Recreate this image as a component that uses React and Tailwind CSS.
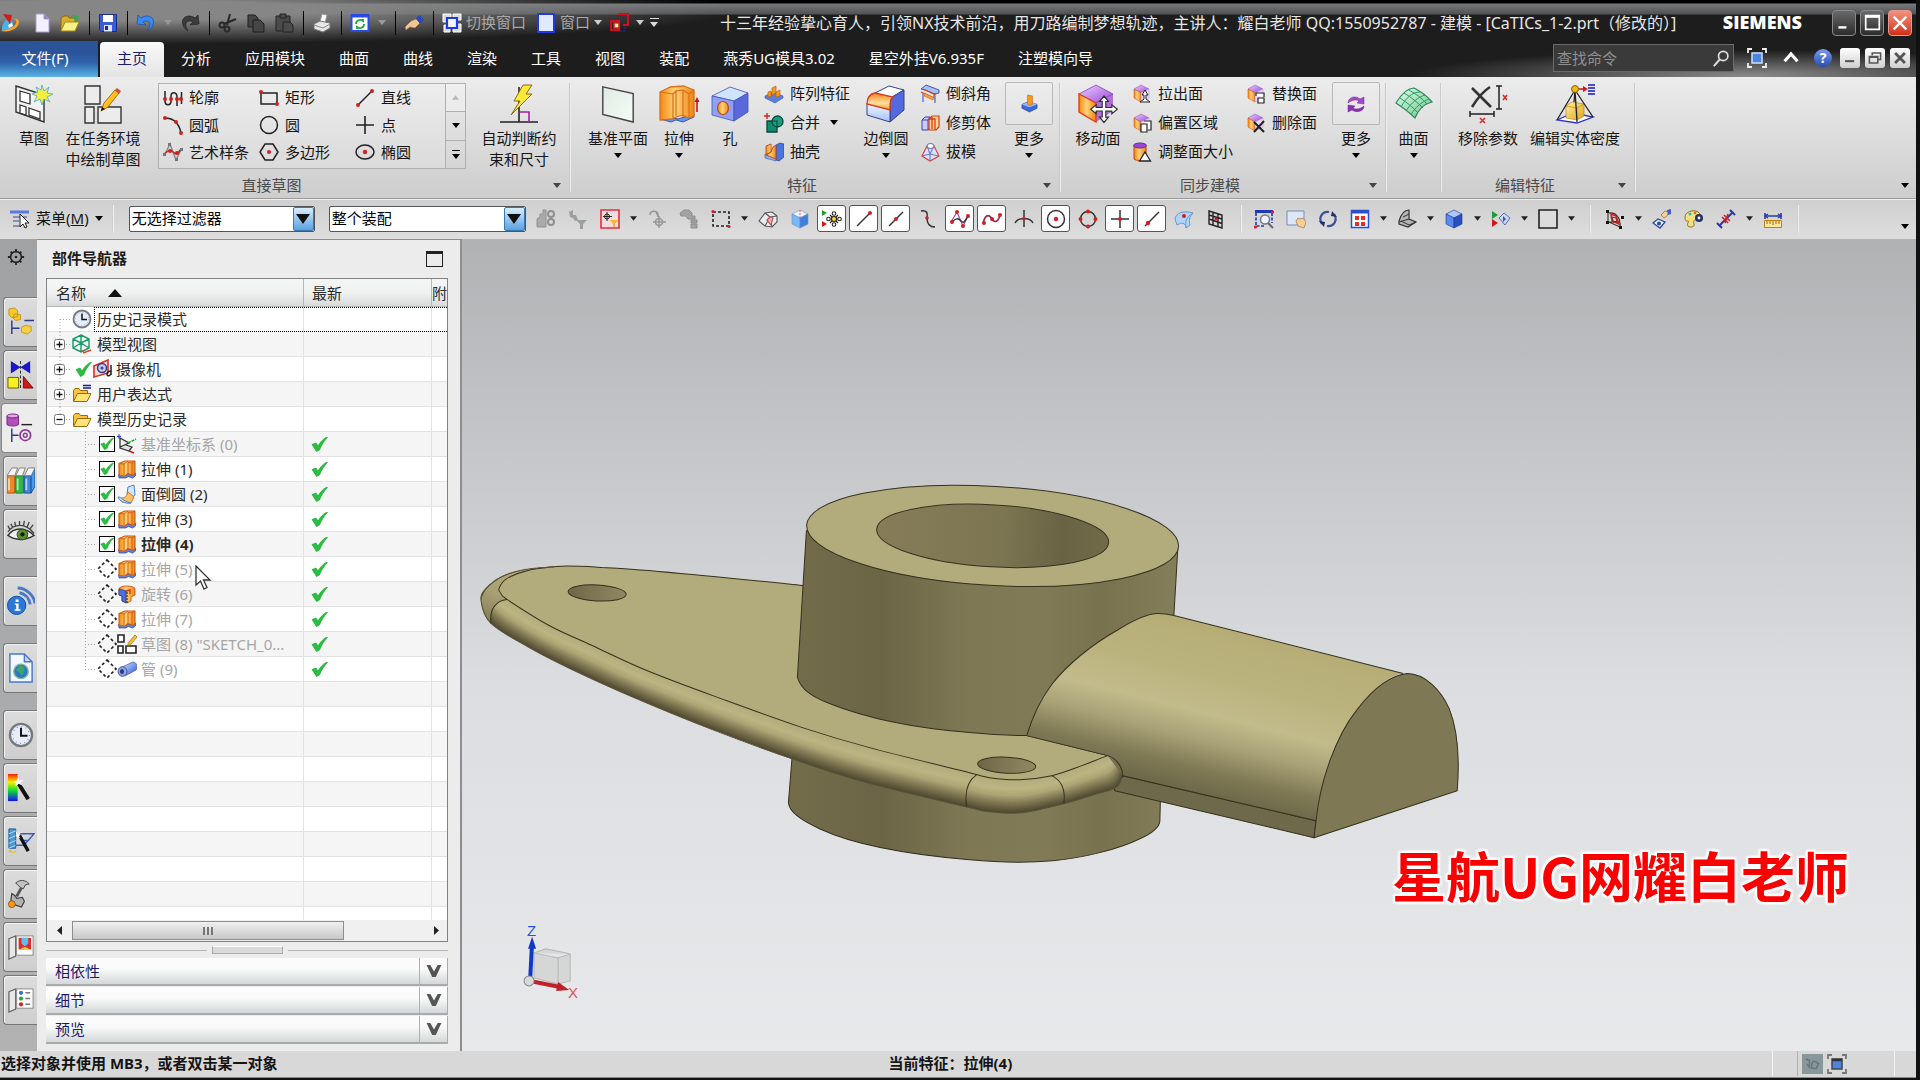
// NX modeling window — title bar, ribbon, selection bar, part navigator, viewport
import { Fragment } from 'react';

const Svg = ({ s = 22, w, h, vb, children, className = '' }) => (
  <svg width={w || s} height={h || s} viewBox={vb || '0 0 20 20'} className={`shrink-0 ${className}`} fill="none" aria-hidden="true">
    {children}
  </svg>
);

// Shared gradients, referenced by id from every icon
const Defs = () => (
  <svg className="absolute h-0 w-0" aria-hidden="true">
    <defs>
      <linearGradient id="gOr" x1="0" x2="1"><stop offset="0" stopColor="#f08a10" /><stop offset=".45" stopColor="#ffd27a" /><stop offset="1" stopColor="#f08410" /></linearGradient>
      <linearGradient id="gOrV" x1="0" x2="0" y1="0" y2="1"><stop offset="0" stopColor="#f0861a" /><stop offset=".6" stopColor="#ffe0a0" /><stop offset="1" stopColor="#f49a28" /></linearGradient>
      <linearGradient id="gBl" x1="0" x2="1" y1="0" y2="1"><stop offset="0" stopColor="#dfe9ff" /><stop offset=".5" stopColor="#7a9cf0" /><stop offset="1" stopColor="#3350b8" /></linearGradient>
      <linearGradient id="gSky" x1="0" x2="0" y1="0" y2="1"><stop offset="0" stopColor="#f4f8ff" /><stop offset="1" stopColor="#a4c0f8" /></linearGradient>
      <linearGradient id="gYe" x1="0" x2="1" y1="0" y2="1"><stop offset="0" stopColor="#fff0a8" /><stop offset="1" stopColor="#e2a310" /></linearGradient>
      <linearGradient id="gPu" x1="0" x2="1" y1="0" y2="1"><stop offset="0" stopColor="#ecd0ff" /><stop offset="1" stopColor="#9a48d8" /></linearGradient>
      <linearGradient id="gGn" x1="0" x2="1" y1="0" y2="1"><stop offset="0" stopColor="#dffbe6" /><stop offset="1" stopColor="#6cc78c" /></linearGradient>
      <linearGradient id="gGl" x1="0" x2="1" y1="0" y2="1"><stop offset="0" stopColor="#dfeae2" /><stop offset="1" stopColor="#f8fcf8" /></linearGradient>
      <linearGradient id="gRb" x1="0" x2="0" y1="0" y2="1"><stop offset="0" stopColor="#f02000" /><stop offset=".3" stopColor="#fff000" /><stop offset=".6" stopColor="#10e030" /><stop offset="1" stopColor="#1010f0" /></linearGradient>
    </defs>
  </svg>
);

const Caret = ({ className = 'text-[#222]', w = 8 }) => (
  <svg width={w} height="5" viewBox="0 0 8 5" className={className} aria-hidden="true"><path d="M0 0h8L4 5z" fill="currentColor" /></svg>
);

const Dot = ({ x, y, r = 1.6 }) => <circle cx={x} cy={y} r={r} fill="#d02020" />;

const Cube = ({ top = '#dfe9ff', left = '#8fb0f5', right = '#4a6ad0', line = '#4258a8' }) => (
  <g stroke={line} strokeWidth=".6" strokeLinejoin="round">
    <path d="M10 1l8 4-8 4-8-4z" fill={top} />
    <path d="M2 5l8 4v10l-8-4z" fill={left} />
    <path d="M18 5l-8 4v10l8-4z" fill={right} />
  </g>
);

const Extrude = () => (
  <>
    <path d="M1.500 15.500l6-1.500 4 1 7-1v3l-3 2-4-1.500-3 1.500H2z" fill="#5a84e8" stroke="#22409a" strokeWidth=".7" />
    <path d="M2 4.500L8 2h10v12.500l-2 2-5-2-3 2.500-6-.5z" fill="url(#gOr)" stroke="#d05a10" strokeWidth="1.100" strokeLinejoin="round" />
    <path d="M2 4.500l5 .5 4-3M7 5v11M11 3.500v11M15 4v12M15 4l3-2M11 3.500l4 .5" stroke="#d05a10" strokeWidth=".9" />
  </>
);

const Tick = ({ s = 17, className = '' }) => (
  <svg width={s} height={s} viewBox="0 0 17 17" className={className} aria-hidden="true">
    <path d="M1 8.500l4-1.500 2 3c2-3.500 4.500-6.500 8-8.500h1.500c-3.500 3.500-6 7.500-8 12.500l-3 1.500z" fill="#28c040" stroke="#12a028" strokeWidth=".6" />
  </svg>
);

const Folder = ({ expr }) => (
  <>
    <path d="M1.500 17V6.500l1.500-2h4l1.500 2h7V9" fill="#f6c53a" stroke="#9a6c08" />
    <path d="M1.500 17.500L5.500 9.500H19l-4 8z" fill="#ffe27a" stroke="#9a6c08" />
    {expr && <path d="M11 1.500h8M11 4h8" stroke="#1a1a9a" strokeWidth="1.300" />}
  </>
);

const Clock = () => (
  <>
    <circle cx="10" cy="10" r="8.500" fill="#e6eefc" stroke="#77797c" strokeWidth="1.800" />
    <circle cx="10" cy="10" r="6.500" stroke="#8a98b8" strokeWidth="1" strokeDasharray=".8 2.600" />
    <path d="M10 4.500V10.500H15" stroke="#111" strokeWidth="1.500" />
  </>
);

/* ── Title bar icons ──────────────────────────────────────── */
const quickIcons = {
  logo: <><path d="M2 18C1 13 4 7 9 6l4 3c0 5-5 9-11 9z" fill="#4ab0e8" /><path d="M1 18c9 2 18-3 18-9 0-3-3-4-6-3 4 0 4 3 2 6-3 3-8 5-14 6z" fill="#f5a52a" /><path d="M3 1l9 1-2 9z" fill="#d81818" /><path d="M8 12l4-2 1 3-4 2z" fill="#fff" /></>,
  new: <path d="M4 1h8l5 5v13H4z M12 1v5h5" fill="#f4f0ff" stroke="#a8a0d8" />,
  open: <><path d="M1 18V5l3-2h4l1 2h6v4" fill="#d8b030" stroke="#8a6a08" /><path d="M1 18l4-9h14l-4 9z" fill="#fbf08a" stroke="#a48a18" /><path d="M11 4c2-3 5-3 6 0l2-1-2 5-4-3 2-.5c-1-2-2-2-4-.5z" fill="#2cb048" /></>,
  save: <><path d="M1.500 1.500h17v17h-15l-2-2z" fill="#3a5ad8" stroke="#1a2a88" /><path d="M5 2h10v7H5z" fill="#fff" /><path d="M6 12h8v6.500H6z" fill="#dfe6ff" /><path d="M7 13h3v4H7z" fill="#1a2a88" /></>,
  undo: <path d="M1 11l1-9 3 3c7-5 15 0 12 7-1 3-4 5-6 6 4-5 4-9 0-10-2 0-3 .5-4 1l3 3z" fill="#3a8af0" stroke="#1a4aa8" strokeWidth=".7" />,
  redo: <path d="M19 11l-1-9-3 3C8 0 0 5 3 12c1 3 3 5 5 6-3-5-3-9 1-10 2 0 3 .5 4 1l-3 3z" fill="#3c3c3c" stroke="#222" strokeWidth=".7" />,
  cut: <g stroke="#2a2a2a" strokeWidth="2"><path d="M12 1l-3 11M18 6L6 11" /><circle cx="4" cy="12" r="2.500" /><circle cx="9" cy="16" r="2.500" /></g>,
  copy: <g fill="#454545" stroke="#1e1e1e"><path d="M2 2h7l3 3v9H2z" /><path d="M7 7h7l4 4v8H7z" /></g>,
  paste: <g fill="#4a4a4a" stroke="#222"><path d="M2 3h14v15H2z" /><path d="M6 1h6v4H6z" /><path d="M9 9h7l3 3v7H9z" /></g>,
  print: <><path d="M8 9l2-8 5 1-2 8z" fill="#fff" stroke="#999" /><path d="M2 11l6-3 10 2v5l-7 4-9-3z" fill="#e6e6e6" stroke="#777" /><path d="M2 12l9 3 7-4" stroke="#888" /></>,
  refresh: <><path d="M1.500 2h17v16h-17z" fill="#fff" stroke="#2a4ae0" strokeWidth="2" /><path d="M2 3h16" stroke="#2a4ae0" strokeWidth="3" /><path d="M6 11c0-4 4-5 7-3V6M14 11c0 4-4 5-7 3v2" stroke="#18a838" strokeWidth="1.800" /></>,
  hand: <><path d="M1 14l6-6 5-2 4 4-5 5-5-1-4 3z" fill="#f0c898" stroke="#a06a38" strokeWidth=".8" /><path d="M12 5l4-3 4 5-4 4z" fill="#2a4ab8" /></>,
  switchWin: <><path d="M1 1h8v8H1zM11 1h8v6h-8zM2 12h6v7H2zM11 11h8v8h-8z" fill="#ddd" stroke="#fff" /><path d="M5 5h10v10H5z" fill="#f4f6ff" stroke="#2038e0" strokeWidth="2.200" /></>,
  window: <path d="M2 1h16v18H2z" fill="#dfeaff" stroke="#2038e0" strokeWidth="2" />,
  red: <><path d="M8 1h10v11h-5M1 8h8v9H1z" stroke="#d01020" strokeWidth="2.200" /><path d="M4 10h5v5H4z" fill="#fff2a0" stroke="#e02020" strokeWidth="1.500" /><path d="M10 18h5v-4" stroke="#3030b0" strokeDasharray="2 1.500" /></>,
};

const quickBar = [
  'new', 'open', '|', 'save', '|', 'undo', 'v', 'redo', '|', 'cut', 'copy', 'paste', '|', 'print', '|', 'refresh', 'v', '|', 'hand', '|',
];

const QuickButton = ({ name }) => (
  <button className="flex w-7 shrink-0 justify-center" aria-label={name}><Svg s={20}>{quickIcons[name]}</Svg></button>
);

const tabs = ['分析', '应用模块', '曲面', '曲线', '渲染', '工具', '视图', '装配', '燕秀UG模具3.02', '星空外挂V6.935F', '注塑模向导'];

const winButton = 'flex h-[26px] w-6 items-center justify-center rounded-[4px] border border-[#8a8a8a] bg-linear-to-b from-[#6a6a6a] to-[#2c2c2c]';
const docButton = 'flex h-5 w-5 items-center justify-center rounded-[3px] bg-linear-to-b from-white to-[#cfcfcf]';

const FullScreen = ({ dark }) => (
  <Svg s={20}>
    <path d="M1 5V1h4M15 1h4v4M19 15v4h-4M5 19H1v-4" stroke={dark ? '#777' : '#eee'} strokeWidth="1.800" />
    <path d="M5 5h10v10H5z" fill="#4a86e0" stroke={dark ? '#444' : '#cfe0ff'} strokeWidth="1.500" />
    {dark && <path d="M5 6h10" stroke="#333" strokeWidth="2.500" />}
  </Svg>
);

const Header = () => (
  <header className="shrink-0 bg-[#1d1d1d] bg-[radial-gradient(ellipse_340px_26px_at_1750px_76px,#8a8a8a,transparent),radial-gradient(ellipse_620px_34px_at_120px_10px,#868686_30%,transparent),linear-gradient(to_bottom,#000_3px,#77797b_4px,#505254_14px,transparent_15px)]">
    <div className="flex h-[41px] items-center pt-1 text-[15px] text-[#e6e6e6]">
      <span className="mr-2 flex w-5 shrink-0"><Svg s={20}>{quickIcons.logo}</Svg></span>
      {quickBar.map((it, i) => (
        <Fragment key={i}>
          {it === '|' && <span className="flex w-[10px] justify-center"><i className="h-6 w-px bg-black" /></span>}
          {it === 'v' && <button className="flex w-4 justify-center" aria-label="展开"><Caret className="text-[#9a9a9a]" /></button>}
          {it.length > 1 && <QuickButton name={it} />}
        </Fragment>
      ))}
      <button className="flex items-center text-[#a8a8a8]"><span className="flex w-7 justify-center"><Svg s={20}>{quickIcons.switchWin}</Svg></span>切换窗口</button>
      <button className="ml-[6px] flex items-center text-[#a8a8a8]"><span className="flex w-7 justify-center"><Svg s={20}>{quickIcons.window}</Svg></span>窗口<span className="flex w-4 justify-center"><Caret className="text-[#ccc]" /></span></button>
      <QuickButton name="red" />
      <button className="flex w-3 justify-center" aria-label="展开"><Caret className="text-[#ccc]" /></button>
      <button className="flex w-4 flex-col items-center gap-[3px]" aria-label="自定义"><i className="h-px w-[9px] bg-[#ddd]" /><Caret className="text-[#ddd]" /></button>
      <h1 className="ml-[58px] flex-1 whitespace-nowrap text-[16px]">十三年经验挚心育人，引领NX技术前沿，用刀路编制梦想轨迹，主讲人：耀白老师 QQ:1550952787 - 建模 - [CaTICs_1-2.prt（修改的）]</h1>
      <strong className="mr-[30px] font-['Open_Sans',sans-serif] text-[18px] font-extrabold text-white">SIEMENS</strong>
      <div className="mr-[4px] flex gap-1">
        <button className={winButton} aria-label="最小化"><Svg s={16}><path d="M3 14h10v3H3z" fill="#fff" /></Svg></button>
        <button className={winButton} aria-label="最大化"><Svg s={17}><path d="M2 2h16v16H2z" stroke="#fff" strokeWidth="2" /><path d="M2 3h16" stroke="#fff" strokeWidth="3" /></Svg></button>
        <button className="flex h-[26px] w-6 items-center justify-center rounded-[4px] border border-[#e89888] bg-linear-to-b from-[#f0907c] to-[#d02c10]" aria-label="关闭"><Svg s={16}><path d="M2 2l16 16M18 2L2 18" stroke="#fff" strokeWidth="3" /></Svg></button>
      </div>
    </div>
    <div className="flex h-9 items-stretch text-[15px] text-white">
      <button className="w-[98px] bg-linear-to-b from-[#2a5398] from-30% via-[#2f62ac] via-60% to-[#5ab4e4] pb-[2px] pr-2">文件(F)</button>
      <nav className="ml-[2px] flex items-stretch">
        <a href="#home" className="mt-px flex items-center rounded-t-[4px] bg-linear-to-b from-[#fafafa] to-[#e4e4e4] px-[17px] pb-[2px] text-[#1a1a6e]">主页</a>
        {tabs.map((t) => <a key={t} href="#tab" className="flex items-center px-[17px] pb-[2px]">{t}</a>)}
      </nav>
      <div className="ml-auto flex items-center pb-[2px]">
        <label className="flex h-7 w-[181px] items-center border border-[#6a6a6a] bg-[#3a3a3a] px-[3px]">
          <input className="w-full bg-transparent text-[15px] placeholder:text-[#8f8f8f] focus:outline-none" placeholder="查找命令" aria-label="查找命令" />
          <Svg s={17}><circle cx="12" cy="7" r="5.500" stroke="#ddd" strokeWidth="2" /><path d="M8 11l-7 8" stroke="#ddd" strokeWidth="2.500" /></Svg>
        </label>
        <button className="ml-3 flex w-[22px] justify-center" aria-label="全屏"><FullScreen /></button>
        <button className="ml-3 flex w-[22px] justify-center" aria-label="折叠功能区"><Svg s={16}><path d="M2 14l8-9 8 9" stroke="#fff" strokeWidth="4" /></Svg></button>
        <button className="ml-3 flex w-[18px] justify-center" aria-label="帮助"><span className="flex h-[18px] w-[18px] items-center justify-center rounded-full bg-linear-to-b from-[#7a9cf0] to-[#2a4cb0] text-[14px] font-bold leading-none">?</span></button>
        <div className="ml-2 mr-[6px] flex gap-[5px]">
          <button className={docButton} aria-label="最小化文档"><Svg s={14}><path d="M3 13h13v3H3z" fill="#555" /></Svg></button>
          <button className={docButton} aria-label="还原文档"><Svg s={14}><path d="M6 6V3h12v9h-4M2 8h12v9H2zM2 9h12" stroke="#555" strokeWidth="2.200" /></Svg></button>
          <button className={docButton} aria-label="关闭文档"><Svg s={14}><path d="M3 3l14 14M17 3L3 17" stroke="#555" strokeWidth="4" /></Svg></button>
        </div>
      </div>
    </div>
  </header>
);

/* ── Ribbon ───────────────────────────────────────────────── */
const big = {
  sketch: (
    <Svg s={40} vb="0 0 40 40"><path d="M2 2l28 9v27L2 28z" fill="#f2f2f2" stroke="#333" strokeWidth="1.400" /><path d="M6 7l10 3v10L6 17zM6 21l6 2v8l-6-2zM15 24l11 4v7l-11-4z" fill="#fff" stroke="#333" strokeWidth="1.300" /><path d="M28 1l2 6 5-4-2 6 6 1-6 3 3 5-6-3-2 6-2-6-6 3 3-6-5-2 6-2-2-5 5 3z" fill="#f4f040" stroke="#4aa8d8" strokeWidth=".8" /></Svg>
  ),
  task: (
    <Svg s={40} vb="0 0 40 40"><path d="M2 2h15v18H2zM2 23h9v16H2zM15 23h23v16H15z" fill="#ececec" stroke="#333" strokeWidth="1.400" /><path d="M18 27l3-8L32 6l4 3-11 14z" fill="#ffc020" stroke="#a86a10" /><path d="M32 6l2-2 4 3-2 3z" fill="#d85038" /><path d="M18 27l1-4 3 2z" fill="#111" /></Svg>
  ),
  auto: (
    <Svg s={40} vb="0 0 40 40"><path d="M20 3v35M1 38h38" stroke="#222" strokeWidth="1.600" /><path d="M21 28h9v10" stroke="#a020a0" strokeWidth="1.600" /><path d="M24 1h9l-6 9h6L12 31l9-14h-6z" fill="#ffe838" stroke="#8a6a10" /></Svg>
  ),
  plane: <Svg s={38} vb="0 0 40 40"><path d="M4 2l32 7v30L4 31z" fill="url(#gGl)" stroke="#444" strokeWidth="1.500" /></Svg>,
  extrude: (
    <Svg w={42} h={38} vb="0 0 42 38">
      <path d="M2 34l11-2 7 2 16-5v3l-11 5-7-2-5 2z" fill="#6a94ec" stroke="#22409a" strokeWidth=".8" />
      <path d="M2 7l10-5 14-1 10 4v26l-6 2-5-3-7 2-4 2-12 1z" fill="url(#gOr)" stroke="#d8701a" strokeWidth="1.300" strokeLinejoin="round" />
      <path d="M2 7l13 2v25M15 9l3-3v25M18 6l7-1v27M25 5l6 4v24M31 9l5-4" stroke="#d8701a" strokeWidth="1.200" />
      <path d="M39 27V16" stroke="#c01818" strokeWidth="1.600" /><path d="M36.500 17l2.500-5 2.500 5z" fill="#c01818" />
    </Svg>
  ),
  hole: (
    <Svg w={40} h={38} vb="0 0 40 38"><g stroke="#4456a8" strokeWidth=".8" strokeLinejoin="round"><path d="M2 11L20 2l18 6-14 8z" fill="#d0e4ff" /><path d="M2 11l22 5v20L2 30z" fill="#90a0fa" /><path d="M38 8L24 16v20l14-9z" fill="#5a68dc" /></g><ellipse cx="13" cy="23" rx="5.500" ry="6.500" fill="url(#gOr)" stroke="#c04a10" strokeWidth="1.200" /></Svg>
  ),
  edge: (
    <Svg w={42} h={40} vb="0 0 42 40"><g stroke="#34408a" strokeWidth="1" strokeLinejoin="round"><path d="M10 9L24 2l15 4-13 8z" fill="#fff" /><path d="M39 6v20L25 38V20c0-3 1-5 2-7z" fill="#5468e0" /><path d="M2 19l23 6v13L2 31z" fill="url(#gSky)" /></g><path d="M2 20c0-6 3-10 8-11l18 4c-3 2-3 6-3 13z" fill="url(#gOrV)" stroke="#d83a18" strokeWidth="1.300" /></Svg>
  ),
  more1: <Svg s={19}><path d="M2 11l7-3 9 3v4l-8 4-8-4z" fill="#3a68d8" stroke="#203a90" strokeWidth=".6" /><path d="M2 11l8 3 8-3-8-3z" fill="#9abcf8" /><path d="M8 1l5 1v9l-3 1-2-1z" fill="#ff9a18" stroke="#b85a00" strokeWidth=".6" /></Svg>,
  move: (
    <Svg w={42} h={40} vb="0 0 42 40"><path d="M19 1l17 9v17L19 38 2 28V10z" fill="#b070e0" /><path d="M19 1l17 9-17 9L2 10z" fill="url(#gPu)" stroke="#8a48b8" strokeWidth=".8" /><path d="M2 10l17 9v19L2 28z" fill="url(#gOr)" stroke="#e0401a" strokeWidth="1.400" /><path d="M27 12l4.500 5.500h-2.700v6h6v-2.700l5.500 4.500-5.500 4.500v-2.700h-6v6h2.700L27 38.500l-4.500-5.500h2.700v-6h-6v2.700l-5.500-4.500 5.500-4.500v2.700h6v-6h-2.700z" fill="#fff" stroke="#333" strokeWidth="1.200" /></Svg>
  ),
  more2: <Svg s={20}><path d="M2 9c0-6 8-8 12-4l4-2v7l-7-1 2-2C10 5 6 6 2 9z" fill="#a44ac8" stroke="#6a2890" strokeWidth=".5" /><path d="M18 12c0 6-8 7-12 4l-4 2v-7l7 1-2 2c3 2 7 1 11-2z" fill="#8a30b0" stroke="#6a2890" strokeWidth=".5" /></Svg>,
  surface: (
    <Svg s={40} vb="0 0 40 40"><path d="M2 19C8 9 14 4 20 4c6 3 13 8 18 14-8 2-14 8-17 16C14 27 8 23 2 19z" fill="url(#gGn)" stroke="#2a8a5a" strokeWidth="1.200" /><path d="M7 23C12 14 18 8 26 8M12 27c5-8 12-14 19-16M17 31c4-8 11-13 18-16M6 14c6 4 13 9 18 15M10 9c7 4 14 10 19 15M15 6c7 4 13 8 18 14" stroke="#2a9a68" /></Svg>
  ),
  params: (
    <Svg s={40} vb="0 0 40 40"><path d="M4 4l19 19M22 3C14 8 9 15 4 23" stroke="#333" strokeWidth="2.600" /><path d="M28 2h6M31 2v23M28 25h6M2 27v6M2 30h24M26 27v6" stroke="#222" strokeWidth="1.500" /><path d="M35 11l4 5M39 11l-4 5M12 34l5 5M17 34l-5 5" stroke="#d03030" strokeWidth="1.600" /></Svg>
  ),
  density: (
    <Svg s={40} vb="0 0 40 40"><path d="M2 36l16-7 20 4-16 6z" fill="#fff" stroke="#3030c0" strokeWidth="1.300" /><path d="M11 22l6-4 12 2v12l-7 4-11-2z" fill="url(#gYe)" stroke="#b07a00" strokeWidth=".6" /><path d="M11 22l11 2 7-4M22 24v12" stroke="#c89018" strokeWidth=".8" /><path d="M20 6L2 36M20 6l18 27M20 6l2 32M20 6l-1 12" stroke="#222" strokeWidth="1.300" /><circle cx="20" cy="5" r="3.500" fill="#f0b818" stroke="#8a6000" /><path d="M24 5h6" stroke="#d01818" strokeWidth="1.500" /><path d="M28 2l5 3-5 3z" fill="#d01818" /><path d="M33 1h7M33 4h7M33 7h7M33 10h7" stroke="#1a1ac0" strokeWidth="1.500" /></Svg>
  ),
};

const BigButton = ({ icon, lines, w, caret, boxed }) => (
  <button className={`flex shrink-0 flex-col items-center pt-[5px] ${w}`}>
    <span className={`flex h-[43px] items-center justify-center ${boxed ? 'w-12 rounded-[2px] border border-[#b8b8b8] bg-white/10' : ''}`}>{big[icon]}</span>
    <span className="mt-[3px] whitespace-nowrap leading-[21px]">{lines.map((l) => <span key={l} className="block">{l}</span>)}</span>
    {caret && <span className="mt-1"><Caret className="text-black" /></span>}
  </button>
);

const faceCube = (
  <g strokeWidth=".5"><path d="M9 1l8 4-8 4-7-4z" fill="url(#gPu)" stroke="#8a48b8" /><path d="M2 5l7 4v9l-7-4z" fill="url(#gOr)" stroke="#d83a10" /><path d="M17 5L9 9v9l8-4z" fill="#e8d8f4" stroke="#b890d0" /></g>
);

const small = {
  profile: <><path d="M2 3v10c0 5 6 5 6 0V8c0-5 6-4 6 1v9M18.500 4v12" stroke="#222" strokeWidth="1.500" /><Dot x="2" y="11" r="2" /><Dot x="8" y="11" r="2" /><Dot x="14" y="11" r="2" /><Dot x="18" y="11" r="2" /></>,
  rect: <><path d="M2 5h16v11H2z" stroke="#222" strokeWidth="1.500" /><Dot x="2" y="4" r="2" /><Dot x="18" y="16" r="2" /></>,
  line: <><path d="M3 17L17 3" stroke="#222" strokeWidth="1.500" /><Dot x="3" y="17" r="2" /><Dot x="17" y="3" r="2" /></>,
  arc: <><path d="M2 3c8 0 14 5 16 15" stroke="#222" strokeWidth="1.500" /><Dot x="2" y="3" r="2" /><Dot x="13" y="7" r="2" /><Dot x="18" y="18" r="2" /></>,
  circle: <circle cx="10" cy="10" r="8.500" stroke="#222" strokeWidth="1.500" />,
  point: <path d="M10 1v18M1 10h18" stroke="#222" strokeWidth="1.600" />,
  spline: <><path d="M2 12L7 2l6 16 5-10" stroke="#8a8a8a" strokeWidth="1.500" /><path d="M1 12c4-3 6-5 9-2s5 2 8-3" stroke="#b02828" strokeWidth="1.500" /><path d="M5 1h3v3H5zM12 16h3v3h-3zM17 6h3v3h-3zM0 11h3v3H0z" fill="#777" /><Dot x="7" y="9" r="2" /><Dot x="14" y="11" r="2" /></>,
  polygon: <><path d="M6 2h8l5 8-5 8H6l-5-8z" stroke="#222" strokeWidth="1.500" /><Dot x="10" y="10" r="2" /></>,
  ellipse: <><ellipse cx="10" cy="10" rx="9" ry="7" stroke="#222" strokeWidth="1.500" /><Dot x="10" y="10" r="2.200" /></>,
  pattern: <><path d="M1 12l8-4 10 4v2l-8 5-10-5z" fill="#5a80dc" stroke="#3a58a8" strokeWidth=".6" /><path d="M4 8l3-1v5l-3 1zM8 4l4-2v7l-4 2zM12 8l4-2v6l-4 1z" fill="#f8981c" stroke="#b06010" strokeWidth=".6" /></>,
  unite: <><path d="M3 8h10v11H3z" fill="#128a70" stroke="#084838" strokeWidth="1.300" /><circle cx="13.500" cy="8.500" r="5.500" fill="#1c9c80" stroke="#084838" strokeWidth="1.300" /><path d="M8 8h5v6" stroke="#084838" strokeWidth="1.100" /><path d="M3 0v6M0 3h6" stroke="#d82020" strokeWidth="1.400" /></>,
  shell: <><path d="M12 3l4-2 4 1v13l-5 4-3-1z" fill="#4a74e0" stroke="#28408a" strokeWidth=".7" /><path d="M1 12l11 5v2L1 16z" fill="#8ab0f4" stroke="#3858a8" strokeWidth=".6" /><path d="M2 4l5-2v8l-5 3zM12 3v14l-10-4 5-3 2-5z" fill="url(#gOr)" stroke="#c04a10" strokeWidth=".9" /></>,
  chamfer: <><path d="M1 5l5-4 13 5v3l-4 1L5 6z" fill="#a8c0f4" stroke="#3848a8" strokeWidth=".9" /><path d="M3 5l13 6M1 8l13 6V9" stroke="#d84018" strokeWidth="1.300" /><path d="M4 9l11 5-2 2L4 12z" fill="#f8a038" stroke="#c05010" strokeWidth=".5" /><path d="M3 9v9M15 12v7" stroke="#6a88e0" strokeWidth="1.600" /></>,
  trim: <><path d="M2 7l3-3h5v11l-2 2H2z" fill="#c8d0fa" stroke="#3a3ad0" /><path d="M2 7h6v10M8 7l2-3" stroke="#3a3ad0" /><path d="M9 6l3-3h7v11l-3 3H9z" fill="#ffd890" stroke="#d83a10" strokeWidth="1.200" /><path d="M9 6h6v11M12 4v12" stroke="#d83a10" strokeWidth="1.300" /></>,
  draft: <><path d="M2 14l5-10h7l5 10-9 5z" fill="#dde4f8" stroke="#d83a30" strokeWidth="1.100" /><path d="M2 14l8-2 9 2M10 12v7M7 4l3 8 4-8" stroke="#6a78d0" strokeWidth="1.100" /><ellipse cx="10.500" cy="4" rx="3.500" ry="2.500" fill="#fff" stroke="#5868c0" /></>,
  pull: <>{faceCube}<path d="M13 6l3 5h-2v4l4 3h-10l4-3v-4h-2z" fill="#fff" stroke="#222" /></>,
  offset: <>{faceCube}<path d="M9 11h6v8H9zM12 8h7v9h-3" fill="#fff" stroke="#222" strokeWidth="1.200" /></>,
  resize: <><path d="M2 4v13c2 2 10 2 12 0V4" fill="url(#gOr)" stroke="#d83a10" /><ellipse cx="8" cy="3.500" rx="6.500" ry="2.500" fill="#9a48d8" stroke="#6a2898" /><path d="M13 10l5.500 9h-11z" fill="#fff" stroke="#222" strokeWidth="1.300" /></>,
  replace: <>{faceCube}<path d="M10 12V9h8v4M12 14h6v5h-6z" fill="#fff" stroke="#222" strokeWidth="1.200" /></>,
  remove: <>{faceCube}<path d="M8 9l10 10M18 8L8 19" stroke="#222" strokeWidth="2" /></>,
};

const SmallButton = ({ icon, label, caret, className = 'h-[29px] gap-[6px]' }) => (
  <button className={`flex items-center whitespace-nowrap ${className}`}><Svg s={20}>{small[icon]}</Svg>{label}{caret && <span className="ml-1"><Caret className="text-black" /></span>}</button>
);

const SmallColumn = ({ items, className = '' }) => (
  <div className={`flex flex-col items-start pt-[2px] ${className}`}>{items.map((it) => <SmallButton key={it.label} {...it} />)}</div>
);

const Group = ({ label, children, className = '' }) => (
  <section className={`relative flex flex-col ${className}`}>
    <div className="flex h-[98px] items-start">{children}</div>
    {label && (
      <div className="flex h-5 items-center text-[#4a4a4a]">
        <h2 className="flex-1 text-center">{label}</h2>
        <button className="flex w-7 justify-center" aria-label={`${label}选项`}><Caret className="text-[#444]" /></button>
      </div>
    )}
    <i className="absolute right-0 top-[6px] h-[109px] w-[2px] bg-linear-to-r from-[#b8b8b8] to-white" />
  </section>
);

const curves = [
  ['profile', '轮廓'], ['rect', '矩形'], ['line', '直线'],
  ['arc', '圆弧'], ['circle', '圆'], ['point', '点'],
  ['spline', '艺术样条'], ['polygon', '多边形'], ['ellipse', '椭圆'],
];

const Ribbon = () => (
  <div className="flex h-[122px] shrink-0 items-stretch border-b border-[#9a9a9a] bg-linear-to-b from-[#ececec] to-[#cdcdcd] text-[15px] text-[#161616]">
    <Group label="直接草图" className="w-[571px]">
      <BigButton icon="sketch" lines={['草图']} w="ml-1 w-[60px]" />
      <BigButton icon="task" lines={['在任务环境', '中绘制草图']} w="w-[78px]" />
      <div className="ml-4 mt-[6px] flex h-[86px] w-[308px] border border-[#b0b0b0]">
        <div className="grid flex-1 grid-cols-[96px_96px_1fr] grid-rows-3 bg-white/15 pb-[2px] pl-1">
          {curves.map(([icon, label]) => <SmallButton key={icon} icon={icon} label={label} className="gap-[6px]" />)}
        </div>
        <div className="flex w-5 flex-col divide-y divide-[#b0b0b0] border-l border-[#b0b0b0]">
          <button className="flex flex-1 items-center justify-center bg-white/25" aria-label="上一行"><Caret w={7} className="rotate-180 text-[#b8b8b8]" /></button>
          <button className="flex flex-1 items-center justify-center" aria-label="下一行"><Caret className="text-black" /></button>
          <button className="flex flex-1 flex-col items-center justify-center gap-[3px]" aria-label="更多曲线"><i className="h-px w-2 bg-black" /><Caret className="text-black" /></button>
        </div>
      </div>
      <BigButton icon="auto" lines={['自动判断约', '束和尺寸']} w="ml-[14px] w-[78px] text-center" />
    </Group>
    <Group label="特征" className="w-[490px]">
      <BigButton icon="plane" lines={['基准平面']} w="ml-4 w-[62px]" caret />
      <BigButton icon="extrude" lines={['拉伸']} w="w-[60px]" caret />
      <BigButton icon="hole" lines={['孔']} w="w-[42px]" />
      <SmallColumn className="ml-[13px]" items={[{ icon: 'pattern', label: '阵列特征' }, { icon: 'unite', label: '合并', caret: true }, { icon: 'shell', label: '抽壳' }]} />
      <BigButton icon="edge" lines={['边倒圆']} w="ml-[6px] w-[60px]" caret />
      <SmallColumn className="ml-1" items={[{ icon: 'chamfer', label: '倒斜角' }, { icon: 'trim', label: '修剪体' }, { icon: 'draft', label: '拔模' }]} />
      <BigButton icon="more1" lines={['更多']} w="ml-[14px] w-12" caret boxed />
    </Group>
    <Group label="同步建模" className="w-[326px]">
      <BigButton icon="move" lines={['移动面']} w="ml-[7px] w-[60px]" />
      <SmallColumn className="ml-1" items={[{ icon: 'pull', label: '拉出面' }, { icon: 'offset', label: '偏置区域' }, { icon: 'resize', label: '调整面大小' }]} />
      <SmallColumn className="ml-[13px]" items={[{ icon: 'replace', label: '替换面' }, { icon: 'remove', label: '删除面' }]} />
      <BigButton icon="more2" lines={['更多']} w="ml-[15px] w-12" caret boxed />
    </Group>
    <Group className="w-[55px]">
      <BigButton icon="surface" lines={['曲面']} w="w-[53px]" caret />
    </Group>
    <Group label="编辑特征" className="w-[194px]">
      <BigButton icon="params" lines={['移除参数']} w="ml-[14px] w-[64px]" />
      <BigButton icon="density" lines={['编辑实体密度']} w="ml-2 w-[94px]" />
    </Group>
    <button className="ml-auto mr-[7px] mt-[106px] h-[5px]" aria-label="功能区选项"><Caret className="text-black" /></button>
  </div>
);

/* ── Selection bar ────────────────────────────────────────── */
const K = { stroke: '#333', strokeWidth: 1.5 };
const sel = {
  gearsOff: <g fill="#a8aca6" stroke="#8e928c"><path d="M1 10l3-2V5h3V1h3v17H1z" /><circle cx="15" cy="5" r="3" fill="none" strokeWidth="2" /><circle cx="15" cy="13" r="3" fill="none" strokeWidth="2" /></g>,
  filterOff: <g fill="#9aa0a0"><path d="M1 3l4-2v5h3l2 5-3 1-2-3-3-1z" /><path d="M8 11h11l-4 4v5h-3v-5z" /></g>,
  snapRed: <><path d="M1 1h18v18H1z" fill="#f4dcdc" stroke="#e03040" strokeWidth="1.600" /><path d="M7 3v9M3 7.500h9" stroke="#222" /><circle cx="7" cy="7.500" r="2.500" stroke="#222" /><path d="M10 11h8l-3 4v3h-2v-3z" fill="#f8b828" /></>,
  moveOff: <g stroke="#989898" strokeWidth="1.600"><path d="M3 6c0-5 8-5 8 0v2M9 3l2 4" /><circle cx="12" cy="13" r="3.500" /><path d="M12 7v12M6 13h13" /></g>,
  rotOff: <g fill="#a2a2a2" stroke="#8e8e8e"><path d="M1 4l4-3h5l3 3v3h3v3H9L7 7H2z" /><path d="M12 11h6v3h-6zM12 15h6v4h-6z" /></g>,
  marquee: <><path d="M2 3h16v14H2z" stroke="#222" strokeWidth="1.600" strokeDasharray="3 2" /><Dot x="2" y="2.500" /><Dot x="18" y="17.500" /></>,
  cubeSel: <g stroke="#555" strokeWidth="1.100"><path d="M1 12l6-8 7-1 5 4v6l-5 5-7-1z" fill="#e8ecf2" /><path d="M7 4l5 4-5 9M12 8l7-1M12 8l2 10" /><path d="M9 11l3-3 3 1-2 7z" fill="#f0b0b0" stroke="#c05050" /></g>,
  cubeBlue: <><Cube top="#e8f4ff" left="#78b8f8" right="#3a80e0" line="#7a8ac0" /><path d="M10 1v9" stroke="#e06060" strokeDasharray="2 1" /></>,
  snapAll: <><path d="M0 1l5 3-5 3z" fill="#18a030" /><path d="M0 12l5 3-5 3z" fill="#d01818" /><g stroke="#222" strokeWidth="1.100"><path d="M8 6l8 8M16 6l-8 8" /><circle cx="12" cy="10" r="2.500" fill="#ffe020" /><circle cx="12" cy="4.500" r="1.800" fill="#fff" /><circle cx="12" cy="15.500" r="1.800" fill="#fff" /><circle cx="6.500" cy="10" r="1.800" fill="#fff" /><circle cx="17.500" cy="10" r="1.800" fill="#fff" /></g></>,
  end: <><path d="M3 17L16 4" {...K} /><Dot x="16" y="4" r="2" /></>,
  mid: <><path d="M3 17L17 3" {...K} /><Dot x="10" y="10" r="2" /></>,
  control: <><path d="M3 2c6-1 7 2 6 7 0 6 2 9 8 9" {...K} /><Dot x="9" y="9" r="1.800" /></>,
  pole: <><path d="M1 13L7 3l6 14 5-10" stroke="#a048c0" strokeWidth="1.200" /><path d="M2 13c4-4 6-4 9-1s4 0 7-5" {...K} /><Dot x="2" y="13" r="2" /><Dot x="7" y="3" r="2" /><Dot x="13" y="17" r="2" /><Dot x="18" y="7" r="2" /></>,
  knot: <><path d="M1 15c2-10 6-10 9-5s7 2 8-5" stroke="#903048" strokeWidth="1.700" /><Dot x="2" y="14" r="2" /><Dot x="10" y="10" r="2" /><Dot x="18" y="6" r="2" /></>,
  inter: <><path d="M10 1v17M1 14c3-6 15-6 18 0" {...K} /><Dot x="10" y="9.500" r="1.800" /></>,
  center: <><circle cx="10" cy="10" r="8.500" {...K} /><Dot x="10" y="10" r="2.200" /></>,
  quad: <><circle cx="10" cy="10" r="7.500" {...K} /><Dot x="10" y="2.500" r="2" /><Dot x="10" y="17.500" r="2" /><Dot x="2.500" y="10" r="2" /><Dot x="17.500" y="10" r="2" /></>,
  exist: <><path d="M10 1v18M1 10h18" {...K} /><Dot x="10" y="10" r="2" /></>,
  tangent: <><path d="M3 17L17 3" {...K} /><Dot x="6" y="14" r="2.200" /></>,
  face: <><path d="M1 10c1-6 8-9 18-6-4 4-4 8-3 12l-4 3c0-4-3-6-7-4l-2 1z" fill="#b0d4f8" stroke="#6a98d0" /><path d="M12 19c-1-6 0-11 7-15" stroke="#6a98d0" /><Dot x="10" y="7" r="2" /></>,
  grid: <><path d="M3 2l13 4v13L3 15zM3 6l13 4M3 10l13 4.500M7 3v13M12 5v13" stroke="#222" strokeWidth="1.400" /><Dot x="10" y="10" /></>,
  zoomWin: <><path d="M1 2.500h18" stroke="#2038b0" strokeWidth="3" /><path d="M2 4v13h9M18 4v10" stroke="#2038b0" strokeWidth="1.600" strokeDasharray="3 1.500" /><circle cx="11" cy="10.500" r="4.500" fill="#eef6ff" stroke="#778" strokeWidth="1.500" /><path d="M14 14l5 5" stroke="#667" strokeWidth="2" /><Dot x="18.500" y="3" /><Dot x="1.500" y="18" /></>,
  pan: <><path d="M1 2h17v14H1z" fill="#dce8f8" stroke="#7a8ab0" /><path d="M10 12l2-3 2 1 3-1 3 4-2 6-6-2z" fill="#f4d098" stroke="#b08040" strokeWidth=".8" /></>,
  rotate: <><path d="M4 15C0 9 4 2 11 3M16 5c4 6 0 13-7 12" stroke="#3a5098" strokeWidth="2.200" /><path d="M1 12l5 6 1-5zM19 8l-5-6-1 5z" fill="#222f60" /></>,
  layout: <><path d="M1.500 1.500h17v17h-17z" fill="#fff" stroke="#2a50d0" strokeWidth="1.500" /><path d="M1.500 3h17" stroke="#2a50d0" strokeWidth="3" /><path d="M5 7h4v4H5zM11 7h4v4h-4zM5 13h4v4H5zM11 13h4v4h-4z" fill="#e83020" /></>,
  orient: <><path d="M2 12C4 5 8 1 12 1v9l7 3-8 5-9-3z" fill="#b4b4b4" stroke="#333" strokeWidth="1.200" /><path d="M2 13l10-3M4 12l8 4 7-3M6 8l6-3" stroke="#333" /></>,
  shaded: <Cube top="#a8c8ff" left="#5a88f0" right="#2a50c0" line="#1a3890" />,
  clip: <><path d="M1 2l6 4-6 4z" fill="#18a030" /><path d="M1 18l6-4-6-4z" fill="#d01818" /><path d="M8 9l5-5 6 5-5 7z" fill="#c8d8f4" stroke="#5a70b0" /><path d="M12 7l3 3-3 3z" fill="#3a58a0" /></>,
  bgBox: <path d="M1 1h18v18H1z" fill="#dcdcdc" stroke="#222" strokeWidth="1.600" />,
  wcs: <><path d="M3 2v11h12M4 4c6-1 12 4 11 14M4 13L15 18" stroke="#333" strokeWidth="1.100" /><path d="M6 5l5 2 3 8-7-3z" stroke="#d02020" strokeWidth="1.600" /><path d="M7 8l4 1 1 4-4-1z" stroke="#8a2020" /><path d="M1 1h3v3H1zM1 12h3v3H1zM16 7h3v3h-3zM14 17h3v3h-3z" fill="#111" /></>,
  showHide: <><path d="M1 14l5-4 7 3-5 6z" fill="#e8f0ff" stroke="#2a48a0" strokeWidth="1.300" /><circle cx="7" cy="14.500" r="2" fill="#2a48a0" /><path d="M9 6l4-4 4 1-2 4-3 2z" fill="#f4d098" stroke="#a07038" strokeWidth=".8" /><path d="M15 1l4-1v5l-3 1z" fill="#3a60c8" /></>,
  palette: <><path d="M1 8c0-5 8-8 13-5 4 3 3 7-1 7-3 1-4 2-3 5s-4 4-6 2 2-5 0-5-3 0-3-4z" fill="#f4e080" stroke="#8a7020" /><circle cx="6" cy="5" r="1.500" fill="#28c0c8" /><circle cx="11" cy="4" r="1.300" fill="#f06040" /><circle cx="15" cy="9" r="4" fill="#282e68" /><circle cx="15" cy="9" r="1.400" fill="#fff" /></>,
  measure: <><path d="M3 17L17 3" stroke="#2a38b0" strokeWidth="2" /><path d="M1 14l5 5M14 1l5 5" stroke="#2a38b0" strokeWidth="2" /><path d="M6 8l6 6M8 6l6 6M9 14l3-9" stroke="#d02020" strokeWidth="1.500" /></>,
  ruler: <><path d="M2 4v6M18 4v6M2 7h16" stroke="#2a38b0" strokeWidth="1.600" /><path d="M5 5l-3 2 3 2M15 5l3 2-3 2" stroke="#2a38b0" strokeWidth="1.300" /><path d="M1.500 11.500h17v7h-17z" fill="#fbe8a0" stroke="#c08010" /><path d="M4 12v3M7 12v3M10 12v4M13 12v3M16 12v3" stroke="#a06000" /></>,
};

// '*' marks a pressed toggle, 'v' a drop-down caret
const selLeft = ['gearsOff', 'filterOff', 'snapRed', 'v', 'moveOff', 'rotOff', 'marquee', 'v', 'cubeSel', 'cubeBlue', '*snapAll', '*end', '*mid', 'control', '*pole', '*knot', 'inter', '*center', 'quad', '*exist', '*tangent', 'face', 'grid'];
const selMid = ['zoomWin', 'pan', 'rotate', 'layout', 'v', 'orient', 'v', 'shaded', 'v', 'clip', 'v', 'bgBox', 'v'];
const selRight = ['wcs', 'v', 'showHide', 'palette', 'measure', 'v', 'ruler'];

const SelItems = ({ items }) => items.map((it, i) => {
  if (it === 'v') return <button key={i} className="flex w-[15px] shrink-0 justify-center" aria-label="展开"><Caret w={7} /></button>;
  const on = it[0] === '*';
  return (
    <span key={i} className="flex w-8 shrink-0 justify-center">
      <button aria-label={it} className={`flex h-[27px] w-[29px] items-center justify-center ${on ? 'rounded-[3px] border border-[#555] bg-white' : ''}`}><Svg s={20}>{sel[on ? it.slice(1) : it]}</Svg></button>
    </span>
  );
});

const BarSep = ({ className }) => <i className={`h-7 w-[2px] shrink-0 bg-linear-to-r from-[#c0c0c0] to-white ${className}`} />;

const Combo = ({ label, value, className }) => (
  <div className={`relative h-[26px] shrink-0 ${className}`}>
    <select aria-label={label} className="h-full w-full appearance-none rounded-[2px] border border-[#4f5558] bg-white pl-[2px] text-[15px] leading-none text-black"><option>{value}</option></select>
    <span className="pointer-events-none absolute right-px top-px flex h-6 w-[21px] items-center justify-center rounded-[2px] border border-[#3a78b0] bg-linear-to-b from-[#d8eefc] to-[#58a0e0]"><svg width="14" height="10" viewBox="0 0 14 10"><path d="M0 0h14L7 10z" fill="#111" /></svg></span>
  </div>
);

const SelectionBar = () => (
  <div className="flex h-10 shrink-0 items-center border-t border-[#efefef] bg-linear-to-b from-[#cfcfcf] to-[#dedede] pb-[2px] text-[15px] text-[#161616]">
    <button className="ml-[10px] flex items-center gap-[6px] whitespace-nowrap">
      <Svg s={20}><path d="M0 3h19" stroke="#5a78e0" strokeWidth="3" /><path d="M3 8h14M3 12h6M3 17h8" stroke="#8a90b0" strokeWidth="2" /><path d="M10 5v13l3-3 2 4 2-1-2-4h4z" fill="#fff" stroke="#222" /></Svg>
      <span>菜单(<u>M</u>)</span><Caret className="text-black" />
    </button>
    <BarSep className="ml-[9px]" />
    <Combo label="类型过滤器" value="无选择过滤器" className="ml-[15px] w-[186px]" />
    <Combo label="选择范围" value="整个装配" className="ml-[14px] w-[197px]" />
    <div className="ml-1 flex items-center"><SelItems items={selLeft} /></div>
    <BarSep className="ml-2" />
    <div className="ml-[6px] flex items-center"><SelItems items={selMid} /></div>
    <BarSep className="ml-[10px]" />
    <div className="ml-2 flex items-center"><SelItems items={selRight} /></div>
    <BarSep className="ml-2" />
    <button className="ml-auto mr-[7px] mt-4" aria-label="工具条选项"><Caret className="text-black" /></button>
  </div>
);

/* ── Resource bar ─────────────────────────────────────────── */
const resources = [
  { name: '装配导航器', icon: <><path d="M2 2l6-1 3 3v6l-6 1-3-3zM8 7l6 1v5l-5 1-3-3z" fill="#f8c828" stroke="#b88808" strokeWidth=".8" /><path d="M5 14v14M5 22h8M18 14h10" stroke="#2a3a90" strokeWidth="1.500" /><path d="M15 21l4-2 6 1v5l-4 3-6-2z" fill="#f8d048" stroke="#b88808" strokeWidth=".8" /></> },
  { name: '约束导航器', icon: <><path d="M4 1l10 6.500L4 14zM24 1L14 7.500 24 14z" fill="#1818c8" /><path d="M14 1v29" stroke="#222" strokeDasharray="3 2" /><path d="M1 18h11v11H1z" fill="#f8f020" stroke="#6a6000" /><path d="M17 17l10 12H17z" fill="#d01818" stroke="#701010" /></> },
  { name: '部件导航器', active: true, icon: <><path d="M1 3v9c2 2 10 2 12 0V3" fill="#b050b8" stroke="#702878" /><ellipse cx="7" cy="3" rx="6" ry="2" fill="#e0a8e4" stroke="#702878" /><path d="M16 12h11" stroke="#222" strokeWidth="1.500" /><path d="M6 16v14M6 23h7" stroke="#2a3a90" strokeWidth="1.500" /><circle cx="20" cy="23" r="5.500" stroke="#903898" strokeWidth="1.800" /><circle cx="20" cy="23" r="2" stroke="#903898" strokeWidth="1.500" /></> },
  { name: '重用库', icon: <g strokeWidth=".9"><path d="M0 10h8v18H0z" fill="#f08a28" stroke="#a04a08" /><path d="M9 10h8v18H9z" fill="#30b840" stroke="#107820" /><path d="M18 10h7v18h-7z" fill="#3a88e0" stroke="#1a4a98" /><path d="M25 10l4-8v19l-4 7z" fill="#4a98e8" stroke="#1a4a98" /><path d="M0 10l5-8h6l-3 8zM9 10l4-8h6l-3 8zM18 10l4-8h7l-4 8z" fill="#f4f4f4" stroke="#777" /><path d="M2 13v12M11 13v12M20 13v12" stroke="#fff" strokeOpacity=".6" strokeWidth="2" /></g> },
  { name: 'HD3D 工具', icon: <><path d="M1 17c6-9 18-9 27 0-8 5-19 6-27 0z" fill="#eee" stroke="#333" strokeWidth="1.500" /><circle cx="16" cy="16" r="5.500" fill="#5a9030" stroke="#2a4a18" /><circle cx="16" cy="16" r="2.200" fill="#111" /><path d="M1 13c6-8 18-10 27 2M3 11L1 7M6 9L4 5M9 8L8 3M13 7V2M17 7l1-5M21 8l2-5M24 10l3-4" stroke="#444" strokeWidth="1.400" /></> },
  { name: 'Web 浏览器', gap: 'mt-[14px]', icon: <><circle cx="10" cy="20" r="9.500" fill="#2a78d8" stroke="#184a98" /><path d="M9 14h3v2.500H9zM8 18h4v6h2v1.500H8V24h1.500v-4.500H8z" fill="#fff" /><path d="M13 7c6 1 10 6 11 12M11 2c9 0 17 8 18 16" stroke="#4a78c8" strokeWidth="3" /></> },
  { name: '历史网页', gap: 'mt-[14px]', icon: <><path d="M3 1h15l8 8v21H3zM18 1v8h8" fill="#f2f8ff" stroke="#4a78c8" strokeWidth="1.500" /><circle cx="14.500" cy="19" r="7.500" fill="#2f78c0" stroke="#88b8a0" strokeWidth="1.500" /><path d="M14 13c3 0 5 3 4 6s-3 6-4 3-5-3-4-5 2-3 4-4z" fill="#38a868" /></> },
  { name: '历史记录', gap: 'mt-[14px]', icon: <g transform="translate(1 2) scale(1.350)"><Clock /></g> },
  { name: '系统材料', icon: <><path d="M1 1h10v28H1z" fill="url(#gRb)" /><path d="M12 11l10 16" stroke="#111" strokeWidth="4" /><path d="M12 4l1 4 4-1-3 3 2 3-4-2-3 3v-4L6 9l4-1z" fill="#fff" /></> },
  { name: 'Process Studio', icon: <><path d="M2 3h7v20H2z" fill="#4a98d8" stroke="#205898" /><path d="M2 8l7-3M2 13l7-3M2 18l7-3M2 23l7-3" stroke="#b8dcf8" /><path d="M12 8h16l-6 7h-5M9 20h8l5-5" stroke="#3a60b8" strokeWidth="1.500" /><path d="M13 10l9 16" stroke="#111" strokeWidth="3.500" /><path d="M9 5l2 3 4-2-3 4 2 3-4-2z" fill="#fff" /><path d="M1 27l3-3 2 3 4-2-2 3z" fill="#d8c838" /></> },
  { name: '加工向导', icon: <><path d="M9 4c5-4 10-3 14 1l-4 1-2 4-3-1z" fill="#c0c4c0" stroke="#444" /><path d="M15 9l-5 9" stroke="#555" strokeWidth="3" /><path d="M5 15l3 2 2 3 6-1 2 4-3 6-6-2-5-5z" fill="#b0b4b0" stroke="#444" strokeWidth="1.300" /><circle cx="5" cy="26" r="3.500" fill="#f09828" stroke="#a05a08" /></> },
  { name: '角色', icon: <><path d="M2 7l7-3v21l-7 3z" fill="#e8e8e8" stroke="#666" strokeWidth="1.300" /><path d="M10 4h17v20H10z" fill="#fff" stroke="#888" /><path d="M12 6h13v12H12z" fill="#d83028" /><path d="M15 6h7v6l-3.500 3-3.500-3z" fill="#68b8f0" /><path d="M14 18c2-3 7-3 9 0z" fill="#f8d048" /></> },
  { name: '系统可视化', icon: <><path d="M2 7l7-3v21l-7 3z" fill="#e8e8e8" stroke="#666" strokeWidth="1.300" /><path d="M10 4h17v20H10z" fill="#fff" stroke="#888" /><circle cx="14.500" cy="8" r="2.200" fill="#2878e0" /><circle cx="14.500" cy="14" r="2.200" fill="#28a838" /><circle cx="14.500" cy="20" r="2.200" fill="#d82020" /><path d="M19 8h5M19 14h5M19 20h5" stroke="#777" strokeWidth="1.500" /></> },
];

const ResourceBar = () => (
  <aside className="flex w-[37px] shrink-0 flex-col items-end gap-[3px] bg-linear-to-b from-[#a0a2a4] to-[#b2b2b2]">
    <button className="mb-[27px] mr-3 mt-2 h-[20px]" aria-label="资源条选项">
      <Svg s={18}><circle cx="10" cy="10" r="6" stroke="#222" strokeWidth="1.800" /><circle cx="10" cy="10" r="1.500" fill="#222" /><path d="M10 1v3M10 16v3M1 10h3M16 10h3M4 4l2 2M14 14l2 2M16 4l-2 2M4 16l2-2" stroke="#222" strokeWidth="2" /></Svg>
    </button>
    {resources.map((r) => (
      <button key={r.name} aria-label={r.name} className={`flex h-[50px] shrink-0 items-center justify-center rounded-l-[4px] border border-r-0 ${r.gap || ''} ${r.active ? 'w-9 border-[#888] bg-[#ececec]' : 'w-[34px] border-[#777] bg-linear-to-b from-[#dcdcdc] to-[#cecece] shadow-[inset_1px_1px_0_#f2f2f2]'}`}>
        <Svg w={28} h={30} vb="0 0 29 31">{r.icon}</Svg>
      </button>
    ))}
  </aside>
);

/* ── Part navigator ───────────────────────────────────────── */
const treeIcons = {
  clock: <Clock />,
  views: <><path d="M9 1l8 4v9l-8 4-8-4V5zM1 5l8 4 8-4M9 1v17M1 14l8-5 8 5" stroke="#1a9a68" strokeWidth="1.400" /><path d="M11 19l8-3M11 18v-2M19 18" stroke="#e04828" strokeWidth="1.800" /></>,
  camera: <><path d="M1 7l14-6v13L1 18z" fill="#f8e0d8" stroke="#d83020" strokeWidth="1.600" /><circle cx="9" cy="9" r="4.500" fill="#c8d0f0" stroke="#3a3a98" strokeWidth="1.500" /><circle cx="9" cy="9" r="1.500" fill="#3a3a98" /><path d="M18 6v10M14 15c0-3 4-4 4-1s-4 4-4 1z" stroke="#222" strokeWidth="1.500" /></>,
  folder: <Folder />,
  expr: <Folder expr />,
  csys: <><path d="M3 4l9 5-9 4zM3 4v10l9 3 3-4-6-2" fill="#e4e4e4" stroke="#333" strokeWidth="1.300" /><path d="M11 9l8-4" stroke="#18a030" strokeWidth="1.600" strokeDasharray="3 1" /><path d="M12 17l5 2" stroke="#d01818" strokeWidth="1.800" /><path d="M2 0v5M0 2.500h4" stroke="#2038d0" /></>,
  extrude: <Extrude />,
  faceBlend: <><path d="M11 3l6-2 1 10-5 4-3-5z" fill="#d4e6fc" stroke="#4880d0" /><path d="M4 14c4 0 6-2 7-6l6 5-3 6-9-1z" fill="#f8c068" stroke="#c87a20" /><path d="M1 13c4 0 4 4 13 6-6 1-12-2-13-6z" fill="#c8dcf8" stroke="#4880d0" /></>,
  revolve: <><path d="M2 5c0-4 16-4 16 0v6l-4 2v4l-4 2-5-2v-5l-3-1z" fill="url(#gOr)" stroke="#c04a10" strokeWidth=".8" /><path d="M2 5l7 2v12l-4-2v-5l-3-1z" fill="#4a70e0" stroke="#2038a0" strokeWidth=".8" /><path d="M9 7l4-1v4" stroke="#c83818" strokeWidth="1.400" /><path d="M10 8v11" stroke="#111" strokeDasharray="2 1" /></>,
  sketch: <><path d="M1 1h6v7H1zM1 12h5v7H1zM9 12h10v7H9z" fill="#fff" stroke="#222" strokeWidth="1.600" /><path d="M10 12l2-4 6-7 2 2-6 7z" fill="#f8c030" stroke="#a06a08" strokeWidth=".7" /></>,
  tube: <><path d="M5 8l11-5c4 0 5 6 3 8L8 17z" fill="url(#gBl)" stroke="#4858a0" strokeWidth=".7" /><ellipse cx="5.500" cy="12.500" rx="4.500" ry="4.800" fill="#8aa4ec" stroke="#4858a0" /><ellipse cx="5" cy="12.500" rx="2" ry="2.500" fill="#303868" /></>,
};

const roots = [
  { icon: 'clock', label: '历史记录模式', focus: true },
  { icon: 'views', label: '模型视图', sign: '+' },
  { icon: 'camera', label: '摄像机', sign: '+', tick: true },
  { icon: 'expr', label: '用户表达式', sign: '+' },
  { icon: 'folder', label: '模型历史记录', sign: '-' },
];

const features = [
  { icon: 'csys', label: '基准坐标系 (0)', on: true, dim: true },
  { icon: 'extrude', label: '拉伸 (1)', on: true },
  { icon: 'faceBlend', label: '面倒圆 (2)', on: true },
  { icon: 'extrude', label: '拉伸 (3)', on: true },
  { icon: 'extrude', label: '拉伸 (4)', on: true, current: true },
  { icon: 'extrude', label: '拉伸 (5)', dim: true },
  { icon: 'revolve', label: '旋转 (6)', dim: true },
  { icon: 'extrude', label: '拉伸 (7)', dim: true },
  { icon: 'sketch', label: '草图 (8) "SKETCH_0...', dim: true },
  { icon: 'tube', label: '管 (9)', dim: true },
];

const RootCell = ({ row, first, last }) => (
  <div className="flex h-6 items-center">
    <button className="shrink-0" aria-label={row.label} tabIndex={row.sign ? 0 : -1}>
      <Svg w={25} h={25} vb="0 0 25 25">
        <path d={`M13 ${first ? 12 : 0}V${last ? 12 : 25}M13 12.500H25`} stroke="#a8a8a8" strokeDasharray="1 2" />
        {row.sign && <><rect x="7.500" y="7.500" width="10" height="10" rx="2" fill="#fff" stroke="#777" /><path d={row.sign === '+' ? 'M9.500 12.500h6M12.500 9.500v6' : 'M9.500 12.500h6'} stroke="#111" strokeWidth="1.300" /></>}
      </Svg>
    </button>
    {row.tick && <Tick className="ml-[3px] mr-px shrink-0" />}
    <Svg s={20}>{treeIcons[row.icon]}</Svg>
    <span className={`flex h-[25px] items-center whitespace-nowrap ${row.focus ? '-mr-[400px] ml-[2px] flex-1 border border-dotted border-black pl-[2px]' : row.tick ? 'pl-[3px]' : 'pl-[5px]'}`}>{row.label}</span>
  </div>
);

const FeatureCell = ({ row, last }) => (
  <div className="flex h-6 items-center">
    <Svg w={50} h={25} vb="0 0 50 25"><path d={`M38.500 0V${last ? 12 : 25}M38 12.500H50`} stroke="#a8a8a8" strokeDasharray="1 2" /></Svg>
    <label className="flex items-center">
      <span className="relative flex h-5 w-5 items-center justify-center">
        <input type="checkbox" defaultChecked={row.on} aria-label={row.label} className={`h-4 w-4 appearance-none ${row.on ? 'border border-black bg-white' : ''}`} />
        {row.on
          ? <Tick s={14} className="pointer-events-none absolute" />
          : <Svg s={20} className="pointer-events-none absolute"><path d="M10 1l9 9-9 9-9-9z" stroke="#222" strokeWidth="1.600" strokeDasharray="3 2.500" /></Svg>}
      </span>
      <Svg s={20}>{treeIcons[row.icon]}</Svg>
      <span className={`ml-1 whitespace-nowrap ${row.dim ? 'text-[#a6a6a6]' : ''} ${row.current ? 'font-bold' : ''}`}>{row.label}</span>
    </label>
  </div>
);

const rowBg = (i) => (i % 2 ? 'bg-[#f5f5f5]' : 'bg-white');
const tdBase = 'h-[25px] border-b border-r border-[#e2e2e2] p-0';

const TreeTable = () => (
  <table className="w-full table-fixed border-separate border-spacing-0 text-[15px] leading-6 text-[#2a2a2a]">
    <thead>
      <tr className="bg-linear-to-b from-[#f4f5f5] via-[#f0f1f1] to-[#d6d9da] text-left">
        <th className="h-7 w-[257px] border-b border-r border-[#b4b6b8] p-0 pl-[9px] font-normal"><span className="flex items-center gap-[22px]">名称<svg width="14" height="8" viewBox="0 0 14 8"><path d="M0 8h14L7 0z" fill="#111" /></svg></span></th>
        <th className="w-[128px] border-b border-r border-[#b4b6b8] p-0 pl-2 font-normal">最新</th>
        <th className="border-b border-[#b4b6b8] p-0 font-normal whitespace-nowrap">附</th>
      </tr>
    </thead>
    <tbody>
      {roots.map((r, i) => (
        <tr key={r.label} className={rowBg(i)}>
          <td className={tdBase}><RootCell row={r} first={i === 0} last={i === roots.length - 1} /></td>
          <td className={tdBase} /><td className={`${tdBase} border-r-0`} />
        </tr>
      ))}
      {features.map((f, i) => (
        <tr key={f.label} className={rowBg(i + 1)}>
          <td className={tdBase}><FeatureCell row={f} last={i === features.length - 1} /></td>
          <td className={`${tdBase} pl-[7px]`}><Tick /></td><td className={`${tdBase} border-r-0`} />
        </tr>
      ))}
      {Array.from({ length: 10 }, (_, i) => (
        <tr key={i} className={rowBg(i + 1)}><td className={tdBase} /><td className={tdBase} /><td className={`${tdBase} border-r-0`} /></tr>
      ))}
    </tbody>
  </table>
);

const PartNavigator = () => (
  <section className="flex w-[425px] shrink-0 flex-col border-r-2 border-t border-[#8c8e90] bg-[#ececec] pb-[6px] pl-[9px] pr-3 text-[15px]">
    <div className="flex h-[38px] shrink-0 items-center justify-between pb-px pl-[6px] pr-[5px]">
      <h2 className="font-bold text-[#1c1c1c]">部件导航器</h2>
      <button className="h-4 w-[17px] border border-t-[3px] border-[#222]" aria-label="最大化面板" />
    </div>
    <div className="flex min-h-0 flex-1 flex-col border border-[#808284] bg-white">
      <div className="min-h-0 flex-1 overflow-hidden"><TreeTable /></div>
      <div className="flex h-[21px] shrink-0 items-center bg-[#f0f0f0]">
        <button className="flex w-[25px] justify-center" aria-label="向左滚动"><svg width="5" height="9" viewBox="0 0 5 9"><path d="M5 0v9L0 4.500z" fill="#222" /></svg></button>
        <div className="flex-1"><div className="flex h-[19px] w-[272px] items-center justify-center gap-[2px] border border-[#8e8e8e] bg-linear-to-b from-[#f0f0f0] to-[#c8c8c8]"><i className="h-2 w-[2px] bg-[#777]" /><i className="h-2 w-[2px] bg-[#777]" /><i className="h-2 w-[2px] bg-[#777]" /></div></div>
        <button className="flex w-[22px] justify-center" aria-label="向右滚动"><svg width="5" height="9" viewBox="0 0 5 9"><path d="M0 0v9l5-4.500z" fill="#222" /></svg></button>
      </div>
    </div>
    <div className="flex h-4 shrink-0 items-center gap-[5px]"><i className="h-px flex-1 bg-[#b4b4b4]" /><i className="h-2 w-[71px] border border-[#aaa] border-t-white bg-[#dadada]" /><i className="h-px flex-1 bg-[#b4b4b4]" /></div>
    {['相依性', '细节', '预览'].map((t) => (
      <button key={t} className="mb-px flex h-7 shrink-0 items-stretch border-b-2 border-r border-[#a8aaac] bg-linear-to-b from-[#fbfbfb] from-40% to-[#d4d8d8] text-left text-[#1a1a66]">
        <span className="flex flex-1 items-center pl-[9px]">{t}</span>
        <span className="flex w-7 items-center justify-center border-l border-[#aeb0b2]"><svg width="16" height="12" viewBox="0 0 16 13"><path d="M0 0h4l4 7 4-7h4l-6 13H6z" fill="#555" /></svg></span>
      </button>
    ))}
  </section>
);

/* ── Viewport ─────────────────────────────────────────────── */
const rimInner = [[557, 566], [529, 570], [508, 578], [500, 588], [502, 593], [508, 599], [550, 625], [593, 645], [650, 671], [727, 700], [803, 727], [870, 747], [970, 772], [990, 777], [1020, 779], [1052, 775], [1082, 765], [1100, 758], [1108, 755]];
const rimOuter = [[557, 566], [526, 569], [503, 576], [487, 588], [482, 600], [492, 623], [530, 647], [577, 671], [637, 698], [713, 729], [792, 758], [860, 780], [966, 806], [990, 811], [1022, 812], [1064, 803], [1094, 794], [1116, 787], [1123, 775]];

// Catmull-Rom spline through the points, as bezier segments
const spline = (p) => p.slice(1).map((c, i) => {
  const a = p[i - 1] || p[i];
  const b = p[i];
  const d = p[i + 2] || c;
  return `C${b[0] + (c[0] - a[0]) / 6} ${b[1] + (c[1] - a[1]) / 6} ${c[0] - (d[0] - b[0]) / 6} ${c[1] - (d[1] - b[1]) / 6} ${c[0]} ${c[1]}`;
}).join('');
const pathOf = (p) => `M${p[0].join(' ')}${spline(p)}`;

const stops = [[0, 178, 171, 123], [0.3, 188, 181, 131], [0.5, 172, 164, 116], [0.72, 130, 122, 84], [0.9, 98, 91, 62], [1, 80, 74, 50]];
const shade = (t) => {
  const i = Math.max(1, stops.findIndex((s) => s[0] >= t));
  const [a, b] = [stops[i - 1], stops[i]];
  const k = (t - a[0]) / (b[0] - a[0]);
  return `rgb(${[1, 2, 3].map((n) => Math.round(a[n] + (b[n] - a[n]) * k)).join(',')})`;
};

const bands = Array.from({ length: 24 }, (_, i) => {
  const t = 1 - i / 24;
  const edge = rimInner.map(([x, y], n) => [x + (rimOuter[n][0] - x) * t, y + (rimOuter[n][1] - y) * t]);
  return { t, d: `${pathOf(edge)}L1108 755L1027 735L803 650Z` };
});

const armEnd = 'M1314 837L1316 820C1320 780 1336 735 1357 709C1373 688 1389 675 1407 673C1425 673 1441 690 1449 708C1457 728 1460 752 1457 790Z';
const armSide = 'M1027 735C1034 712 1043 696 1052 684C1068 663 1094 643 1117 630C1136 618 1148 613 1158 613C1164 613 1170 614 1174 615L1403 673C1389 675 1373 688 1357 709C1336 735 1320 780 1316 820L1123 775L1108 755Z';

const Part = () => (
  <svg viewBox="463 239 1453 811" preserveAspectRatio="xMinYMin slice" className="block h-full w-full" fill="none" role="img" aria-label="模型">
    <defs>
      <linearGradient id="mBody" gradientUnits="userSpaceOnUse" x1="798" x2="1178"><stop offset="0" stopColor="#726c4b" /><stop offset=".22" stopColor="#6b6546" /><stop offset=".45" stopColor="#7f7855" /><stop offset=".65" stopColor="#807a57" /><stop offset=".8" stopColor="#78724f" /><stop offset="1" stopColor="#857e5a" /></linearGradient>
      <linearGradient id="mHole" x1="0" x2="1"><stop offset="0" stopColor="#867c58" /><stop offset=".55" stopColor="#7c7552" /><stop offset=".8" stopColor="#696344" /><stop offset="1" stopColor="#726b4a" /></linearGradient>
      <linearGradient id="mPin" x1="0" x2="1"><stop offset="0" stopColor="#6e6748" /><stop offset="1" stopColor="#918862" /></linearGradient>
      <linearGradient id="mArm" gradientUnits="userSpaceOnUse" x1="1190" y1="619" x2="1149" y2="781"><stop offset="0" stopColor="#b6ad76" /><stop offset=".3" stopColor="#bbb37e" /><stop offset=".52" stopColor="#c2bb8b" /><stop offset=".68" stopColor="#a9a277" /><stop offset=".85" stopColor="#807a56" /><stop offset="1" stopColor="#6c6748" /></linearGradient>
      <linearGradient id="mTip" x1=".6" y1="0" x2=".2" y2="1"><stop offset="0" stopColor="#b2ab7b" /><stop offset=".5" stopColor="#a8a074" /><stop offset="1" stopColor="#857d58" /></linearGradient>
    </defs>
    <g stroke="#35311d" strokeWidth="1" strokeLinejoin="round">
      <path d="M794 740L789 802C790 812 803 820 820 828C850 842 900 853 970 859C1003 862 1030 862 1053 860C1085 857 1120 848 1140 838C1152 833 1160 826 1160 820L1161 780Z" fill="url(#mBody)" />
      <path d="M1108 755L1123 775L1316 820L1314 837L1115 790Z" fill="#6e694b" />
      {bands.map((b) => <path key={b.t} d={b.d} fill={shade(b.t)} stroke="none" />)}
      <path d="M529 569C503 573 483 586 482 602C483 612 487 618 492 623C490 610 497 600 508 599L540 590Z" fill="url(#mTip)" stroke="none" />
      <path d={`${pathOf(rimInner)}L1027 735L803 585C735 578 640 568 603 567C585 566 570 565 557 566Z`} fill="#b2ab7b" />
      <path d={pathOf(rimOuter)} stroke="#5a5338" />
      <path d="M1123 775C1123 766 1117 758 1108 755M508 599C497 600 490 609 492 623M977 774C967 781 965 793 967 806M1052 775C1062 780 1066 790 1064 803" />
      <ellipse cx="598" cy="592.500" rx="29" ry="8" transform="rotate(3 598 592)" fill="url(#mPin)" />
      <ellipse cx="1007" cy="764.500" rx="29" ry="8" transform="rotate(3 1007 764)" fill="url(#mPin)" />
      <path d="M807 530L798 677C802 689 812 696 830 703C870 719 920 728 970 732C990 734 1010 735 1027 735L1160 735L1174 615L1178 547Z" fill="url(#mBody)" stroke="none" />
      <path d="M807 530L798 677C802 689 812 696 830 703C870 719 920 728 970 732C990 734 1010 735 1027 735M1174 615L1178 547" />
      <ellipse cx="993" cy="535.500" rx="186" ry="49.500" transform="rotate(3.300 993 535.500)" fill="#b2ab7b" />
      <ellipse cx="993" cy="535.500" rx="116" ry="31" transform="rotate(3.300 993 535.500)" fill="url(#mHole)" />
      <path d={armSide} fill="url(#mArm)" stroke="none" />
      <path d="M1403 673L1174 615C1170 614 1164 613 1158 613C1148 613 1136 618 1117 630C1094 643 1068 663 1052 684C1043 696 1034 712 1027 735L1108 755M1123 775L1316 820" />
      <path d="M1108 755C1117 758 1123 766 1123 777" />
      <path d={armEnd} fill="#7f7855" />
    </g>
    {/* View triad */}
    <path d="M535 952l12-4 24 5v27l-12 3-24-6zM535 952l24 5 12-4M559 957v26" fill="#cfd0cf" stroke="#b4b6b4" fillOpacity=".7" />
    <path d="M531 980L533 942" stroke="#1238c8" strokeWidth="4" /><path d="M529 948l4-12 4 12z" fill="#1238c8" />
    <path d="M531 980l30 6" stroke="#c02028" strokeWidth="4" /><path d="M559 981l11 8-13 1z" fill="#c02028" />
    <circle cx="530" cy="980" r="5" fill="#d8d8d8" stroke="#888" />
    <g fontFamily="Liberation Sans, sans-serif" fontSize="15"><text x="528" y="935" fill="#2a50d8">Z</text><text x="569" y="997" fill="#e05058">X</text></g>
  </svg>
);

const Viewport = () => (
  <main className="relative min-w-0 flex-1 overflow-hidden bg-linear-to-b from-[#b1b2b4] via-[#dcdde0] via-55% to-[#e8e9eb]">
    <Part />
    <p className="absolute bottom-[144px] right-[67px] whitespace-nowrap font-['Noto_Sans_CJK_SC',sans-serif] text-[54px] font-bold leading-[64px] text-[#fa0000] [text-shadow:2px_2px_2px_#fff,-2px_-2px_2px_#fff,2px_-2px_2px_#fff,-2px_2px_2px_#fff]">星航UG网耀白老师</p>
  </main>
);

const StatusBar = () => (
  <footer className="flex h-[27px] shrink-0 items-stretch border-b border-[#8a8a8a] bg-[#d8d8d8] pb-px text-[15px] font-bold text-[#141414]">
    <p className="flex flex-[888] items-center pl-px">选择对象并使用 MB3，或者双击某一对象</p>
    <p className="flex flex-[884] items-center">当前特征：拉伸(4)</p>
    <span className="w-[25px] border-l border-[#f4f4f4]" />
    <div className="flex w-[97px] items-center gap-1 border-l border-[#b0b0b0] pl-1">
      <button className="flex h-5 w-[21px] items-center justify-center bg-[#87979a]" aria-label="通知"><Svg s={15}><path d="M1 4l5 2v9l-3-4M9 16c-1-8 3-11 5-8l4 2-3 7z" stroke="#6c7478" strokeWidth="2" /></Svg></button>
      <button aria-label="全屏"><FullScreen dark /></button>
    </div>
    <span className="w-[22px] border-l border-[#f4f4f4]" />
  </footer>
);

const App = () => (
  <div className="relative flex h-screen flex-col overflow-hidden bg-[#111] pb-[2px] pr-1 font-['Noto_Sans','Noto_Sans_CJK_SC',sans-serif]">
    <Defs />
    <Header />
    <Ribbon />
    <SelectionBar />
    <div className="flex min-h-0 flex-1">
      <ResourceBar />
      <PartNavigator />
      <Viewport />
    </div>
    <StatusBar />
    {/* Mouse pointer over the tree */}
    <svg width="17" height="25" viewBox="0 0 17 25" className="absolute left-[195px] top-[565px]" aria-hidden="true"><path d="M1 1v19l4.500-4 3.500 8 3-1.500-3.500-7.500H15z" fill="#fff" stroke="#333" strokeWidth="1.300" /></svg>
  </div>
);

export default App;
